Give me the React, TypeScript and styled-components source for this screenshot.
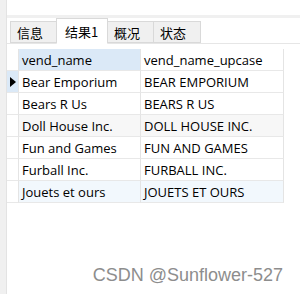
import React from "react";
import styled, { createGlobalStyle } from "styled-components";

const Global = createGlobalStyle`
  html, body { margin: 0; padding: 0; background: #ffffff; }
  body { width: 300px; height: 294px; overflow: hidden; }
`;

const Frame = styled.div`
  display: flex;
  width: 300px;
  height: 294px;
  background: #ffffff;
`;

const LeftStrip = styled.div`
  width: 6px;
  background: #f0f0f0;
  border-right: 1px solid #e3e3e3;
`;

const Main = styled.div`
  flex: 1;
  display: flex;
  flex-direction: column;
  font-family: "Open Sans", "Noto Sans CJK SC", sans-serif;
  font-size: 13px;
  color: #000;
`;

const TopBlank = styled.div`
  height: 15px;
  background: #ffffff;
`;

const Divider = styled.div`
  height: 3px;
  background: #f0f0f0;
`;

const TabBar = styled.div`
  display: flex;
  align-items: flex-end;
  height: 25px;
  padding-left: 3px;
  border-bottom: 1px solid #e6e6e6;
`;

const Tab = styled.div<{ $active?: boolean; $w: number }>`
  box-sizing: border-box;
  width: ${(p) => p.$w}px;
  height: ${(p) => (p.$active ? 26 : 22)}px;
  margin-bottom: ${(p) => (p.$active ? -1 : 0)}px;
  padding-left: ${(p) => (p.$active ? 8 : 6)}px;
  padding-top: ${(p) => (p.$active ? 1 : 1)}px;
  display: flex;
  align-items: center;
  font-family: "Noto Sans CJK SC", sans-serif;
  font-size: 13px;
  background: ${(p) => (p.$active ? "#ffffff" : "#f0f0f0")};
  border: 1px solid #d9d9d9;
  border-bottom: ${(p) => (p.$active ? "1px solid #ffffff" : "1px solid #d9d9d9")};
  border-left: ${(p) => (p.$active ? "1px solid #d9d9d9" : "1px solid #d9d9d9")};
  & + & {
    margin-left: -1px;
  }
`;

const Grid = styled.div`
  margin-top: 5px;
  width: 277px;
  display: grid;
  grid-template-columns: 12px 122px 143px;
`;

const Cell = styled.div<{ $bg?: string }>`
  box-sizing: border-box;
  height: 22px;
  display: flex;
  align-items: center;
  padding-left: 3px;
  white-space: nowrap;
  background: ${(p) => p.$bg || "#ffffff"};
  border-right: 1px solid #e4e4e4;
  border-bottom: 1px solid #e8e8e8;
`;

const Indicator = styled.div<{ $bg?: string }>`
  box-sizing: border-box;
  height: 22px;
  display: flex;
  align-items: center;
  justify-content: center;
  background: ${(p) => p.$bg || "#ffffff"};
  border-right: 1px solid #e4e4e4;
  border-bottom: 1px solid #e8e8e8;
`;

const Arrow = styled.div`
  width: 0;
  height: 0;
  border-top: 5px solid transparent;
  border-bottom: 5px solid transparent;
  border-left: 6px solid #000;
  margin-left: 1px;
`;

const Watermark = styled.div`
  margin-top: auto;
  margin-bottom: 8px;
  width: 276px;
  text-align: right;
  font-family: "Liberation Sans", Arial, sans-serif;
  font-size: 18px;
  color: #8d8d8d;
`;

const rows: [string, string][] = [
  ["Bear Emporium", "BEAR EMPORIUM"],
  ["Bears R Us", "BEARS R US"],
  ["Doll House Inc.", "DOLL HOUSE INC."],
  ["Fun and Games", "FUN AND GAMES"],
  ["Furball Inc.", "FURBALL INC."],
  ["Jouets et ours", "JOUETS ET OURS"],
];

const rowBg = ["#ffffff", "#ffffff", "#f7f7f7", "#ffffff", "#ffffff", "#f2f8fd"];

export default function App() {
  return (
    <>
      <Global />
      <Frame>
        <LeftStrip />
        <Main>
          <TopBlank />
          <Divider />
          <TabBar>
            <Tab $w={47}>信息</Tab>
            <Tab $active $w={52}>结果1</Tab>
            <Tab $w={47}>概况</Tab>
            <Tab $w={48}>状态</Tab>
          </TabBar>
          <Grid>
            <Indicator $bg="#ffffff" />
            <Cell $bg="#dbe9f7">vend_name</Cell>
            <Cell>vend_name_upcase</Cell>
            {rows.map(([a, b], i) => (
              <React.Fragment key={a}>
                <Indicator $bg={i === 0 ? "#dbe9f7" : "#ffffff"}>{i === 0 && <Arrow />}</Indicator>
                <Cell $bg={rowBg[i]}>{a}</Cell>
                <Cell $bg={rowBg[i]}>{b}</Cell>
              </React.Fragment>
            ))}
          </Grid>
          <Watermark>CSDN @Sunflower-527</Watermark>
        </Main>
      </Frame>
    </>
  );
}
